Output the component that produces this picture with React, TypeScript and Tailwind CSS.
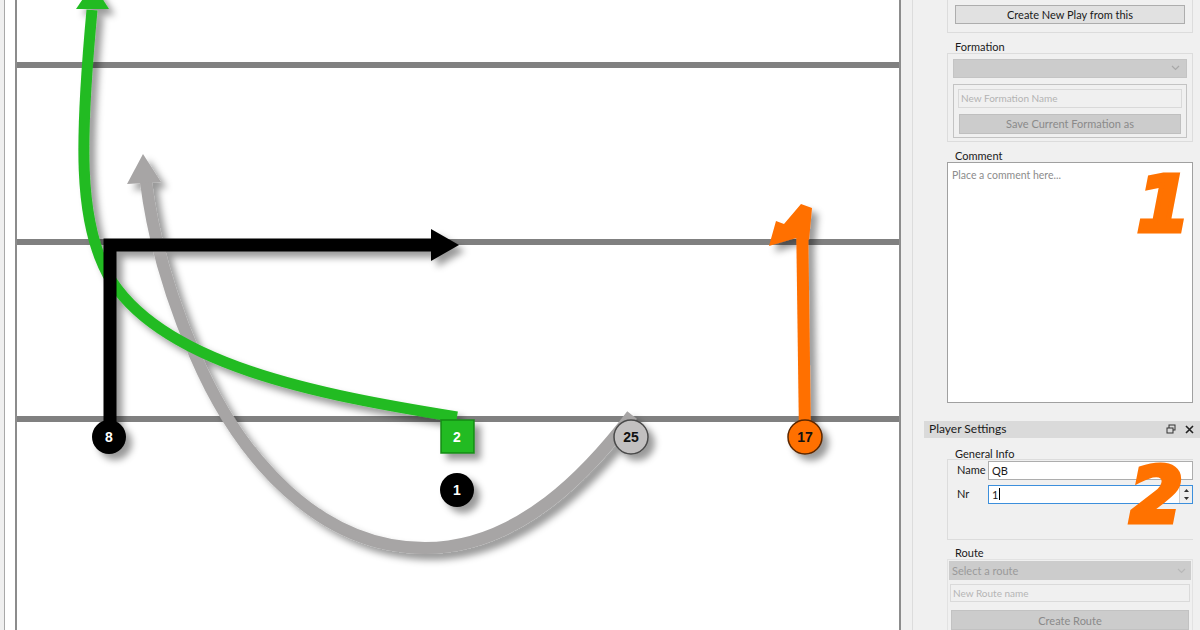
import React from 'react';

const ui = { fontFamily: 'Lato, "Noto Sans", sans-serif' };

function Field() {
  return (
    <svg
      className="absolute inset-0"
      width="882"
      height="630"
      viewBox="17 0 882 630"
    >
      <defs>
        <filter id="sh" x="-20%" y="-20%" width="140%" height="140%">
          <feDropShadow dx="6" dy="6" stdDeviation="3.5" floodColor="#000" floodOpacity="0.4" />
        </filter>
      </defs>

      {/* yard lines */}
      <rect x="17" y="62" width="882" height="6" fill="#808080" />
      <rect x="17" y="239" width="882" height="6" fill="#808080" />
      <rect x="17" y="416" width="882" height="6" fill="#808080" />

      <g filter="url(#sh)">
        {/* gray route */}
        <path
          d="M632,415 C590,470 520,548 425,548 C320,548 240,460 195,355 C165,285 152,230 146,182"
          fill="none"
          stroke="#a7a5a5"
          strokeWidth="12"
        />
        <polygon points="127,184 143,154 161,182" fill="#a7a5a5" />

        {/* green route */}
        <path
          d="M457,417 C320,395 160,365 108,275 C78,220 80,140 92,10"
          fill="none"
          stroke="#22bb22"
          strokeWidth="11"
        />
        <polygon points="76,9 93,-16 109,9" fill="#22bb22" />

        {/* black route */}
        <path d="M110,437 L110,245 L434,245" fill="none" stroke="#000" strokeWidth="13" />
        <polygon points="431,229 459,245 431,261" fill="#000" />

        {/* orange route */}
        <path d="M805,437 L802,214" fill="none" stroke="#ff6f00" strokeWidth="12" />
        <polygon points="769,246 776,221 784,224 801,204 812,208 809,240 796,238" fill="#ff6f00" />

        {/* players */}
        <circle cx="109" cy="437" r="17" fill="#000" />
        <rect x="441" y="420" width="33" height="33" fill="#22bb22" stroke="#178a17" strokeWidth="1.5" />
        <circle cx="631" cy="437" r="17" fill="#c2c0c0" stroke="#4a4a4a" strokeWidth="1.5" />
        <circle cx="805" cy="437" r="17" fill="#ff6f00" stroke="#5a2800" strokeWidth="1.5" />
        <circle cx="457" cy="490" r="17" fill="#000" />
      </g>

      <g fontFamily="'Liberation Sans', Arial, sans-serif" fontWeight="700" fontSize="14" textAnchor="middle">
        <text x="109" y="442" fill="#fff">8</text>
        <text x="457" y="442" fill="#fff">2</text>
        <text x="631" y="442" fill="#111">25</text>
        <text x="805" y="442" fill="#111">17</text>
        <text x="457" y="495" fill="#fff">1</text>
      </g>
    </svg>
  );
}

function Chevron({ color = '#a8a8a8' }: { color?: string }) {
  return (
    <svg width="9" height="6" viewBox="0 0 9 6">
      <path d="M1,1 L4.5,4.5 L8,1" fill="none" stroke={color} strokeWidth="1.2" />
    </svg>
  );
}

function Panel() {
  return (
    <div className="relative w-[299px] h-full bg-[#f0f0f0] pl-[11px] text-[11px] text-[#1a1a1a]" style={ui}>
      <div className="h-full border-l border-[#dcdcdc] flex flex-col">
        {/* play group */}
        <div className="ml-[34px] mr-[7px] h-[33px] border-x border-b border-[#dcdcdc] px-[7px] pt-[5px]">
          <div className="h-[19px] bg-[#e1e1e1] border border-[#adadad] flex items-center justify-center leading-none">
            Create New Play from this
          </div>
        </div>

        {/* formation */}
        <div className="ml-[42px] mt-[8px] h-[12px] leading-[12px]">Formation</div>
        <div className="ml-[34px] mr-[7px] h-[90px] border border-[#dcdcdc] px-[5px] pt-[5px]">
          <div className="h-[19px] bg-[#cccccc] border border-[#c4c4c4] flex items-center justify-end pr-[6px]">
            <Chevron />
          </div>
          <div className="mt-[6px] h-[54px] border border-[#c3c3c3] p-[4px]">
            <div className="h-[19px] bg-[#f0f0f0] border border-[#d9d9d9] flex items-center pl-[2px] text-[10px] text-[#b3b3b3] leading-none">
              New Formation Name
            </div>
            <div className="mt-[6px] h-[20px] mx-[1px] bg-[#cccccc] border border-[#bfbfbf] flex items-center justify-center text-[#8a8a8a] leading-none">
              Save Current Formation as
            </div>
          </div>
        </div>

        {/* comment */}
        <div className="ml-[42px] mt-[8px] h-[12px] leading-[12px]">Comment</div>
        <div className="ml-[34px] mr-[7px] h-[244px] bg-white border border-[#a0a0a0] px-[4px] pt-[5px] text-[10.5px] text-[#8c8c8c] leading-[14px]">
          Place a comment here...
        </div>

        {/* player settings dock */}
        <div className="ml-[11px] mt-[18px] h-[17px] bg-[#dadada] flex items-center pl-[5px] pr-[6px] text-[12px] leading-none">
          <span className="flex-1">Player Settings</span>
          <svg width="10" height="10" viewBox="0 0 10 10" className="mr-[9px]">
            <rect x="3" y="1" width="6" height="5" fill="none" stroke="#333" strokeWidth="1" />
            <rect x="1" y="4" width="6" height="5" fill="#dadada" stroke="#333" strokeWidth="1" />
          </svg>
          <svg width="9" height="9" viewBox="0 0 9 9">
            <path d="M1,1 L8,8 M8,1 L1,8" stroke="#222" strokeWidth="1.6" />
          </svg>
        </div>

        {/* general info */}
        <div className="ml-[42px] mt-[11px] h-[10px] leading-[10px]">General Info</div>
        <div className="ml-[34px] mr-[7px] h-[82px] border border-[#dcdcdc] border-r-0 pt-[1px] pl-[9px]">
          <div className="h-[19px] flex items-center">
            <span className="w-[31px]">Name</span>
            <div className="flex-1 h-full bg-white border border-[#adadad] flex items-center pl-[3px] leading-none">QB</div>
          </div>
          <div className="mt-[5px] h-[19px] flex items-center">
            <span className="w-[31px]">Nr</span>
            <div className="flex-1 h-full bg-white border border-[#3c8fdc] flex items-center pl-[3px] leading-none">
              <span>1</span>
              <span className="w-px h-[12px] bg-black ml-px" />
              <span className="flex-1" />
              <div className="w-[13px] h-full flex flex-col border-l border-[#d0d0d0] bg-[#f0f0f0]">
                <div className="flex-1 flex items-center justify-center">
                  <svg width="5" height="3" viewBox="0 0 5 3"><path d="M0,3 L2.5,0 L5,3 Z" fill="#333" /></svg>
                </div>
                <div className="flex-1 flex items-center justify-center">
                  <svg width="5" height="3" viewBox="0 0 5 3"><path d="M0,0 L2.5,3 L5,0 Z" fill="#333" /></svg>
                </div>
              </div>
            </div>
          </div>
        </div>

        {/* route */}
        <div className="ml-[42px] mt-[7px] h-[12px] leading-[12px]">Route</div>
        <div className="ml-[34px] mr-[7px] flex-1 border-t border-x border-[#e2e2e2] px-[1px] pt-px">
          <div className="h-[19px] bg-[#cccccc] flex items-center pl-[3px] pr-[5px] text-[#9a9a9a] leading-none">
            <span className="flex-1">Select a route</span>
            <Chevron color="#b8b8b8" />
          </div>
          <div className="mt-[4px] mx-px h-[18px] bg-[#f0f0f0] border border-[#dadada] flex items-center pl-[2px] text-[10px] text-[#b5b5b5] leading-none">
            New Route name
          </div>
          <div className="mt-[8px] mx-[2px] h-[20px] bg-[#cccccc] border border-[#c2c2c2] flex items-center justify-center text-[#8a8a8a] leading-none">
            Create Route
          </div>
        </div>
      </div>

      {/* overlay callout numbers */}
      <span
        className="absolute left-[236px] top-[167px] text-[76px] leading-none font-bold italic text-[#ff7200] [-webkit-text-stroke:5px_#ff7200]"
        style={{ fontFamily: '"DejaVu Sans", sans-serif' }}
      >
        1
      </span>
      <span
        className="absolute left-[229px] top-[458px] text-[76px] leading-none font-bold italic text-[#ff7200] [-webkit-text-stroke:5px_#ff7200]"
        style={{ fontFamily: '"DejaVu Sans", sans-serif' }}
      >
        2
      </span>
    </div>
  );
}

export default function App() {
  return (
    <div className="w-[1200px] h-[630px] flex overflow-hidden bg-white">
      <div className="w-[4px] h-full bg-[#efefef]" />
      <div className="w-px h-full bg-[#a8a8a8]" />
      <div className="w-[10px] h-full bg-white" />
      <div className="relative w-[886px] h-full bg-white border-x-2 border-[#8c8c8c]">
        <Field />
      </div>
      <Panel />
    </div>
  );
}
